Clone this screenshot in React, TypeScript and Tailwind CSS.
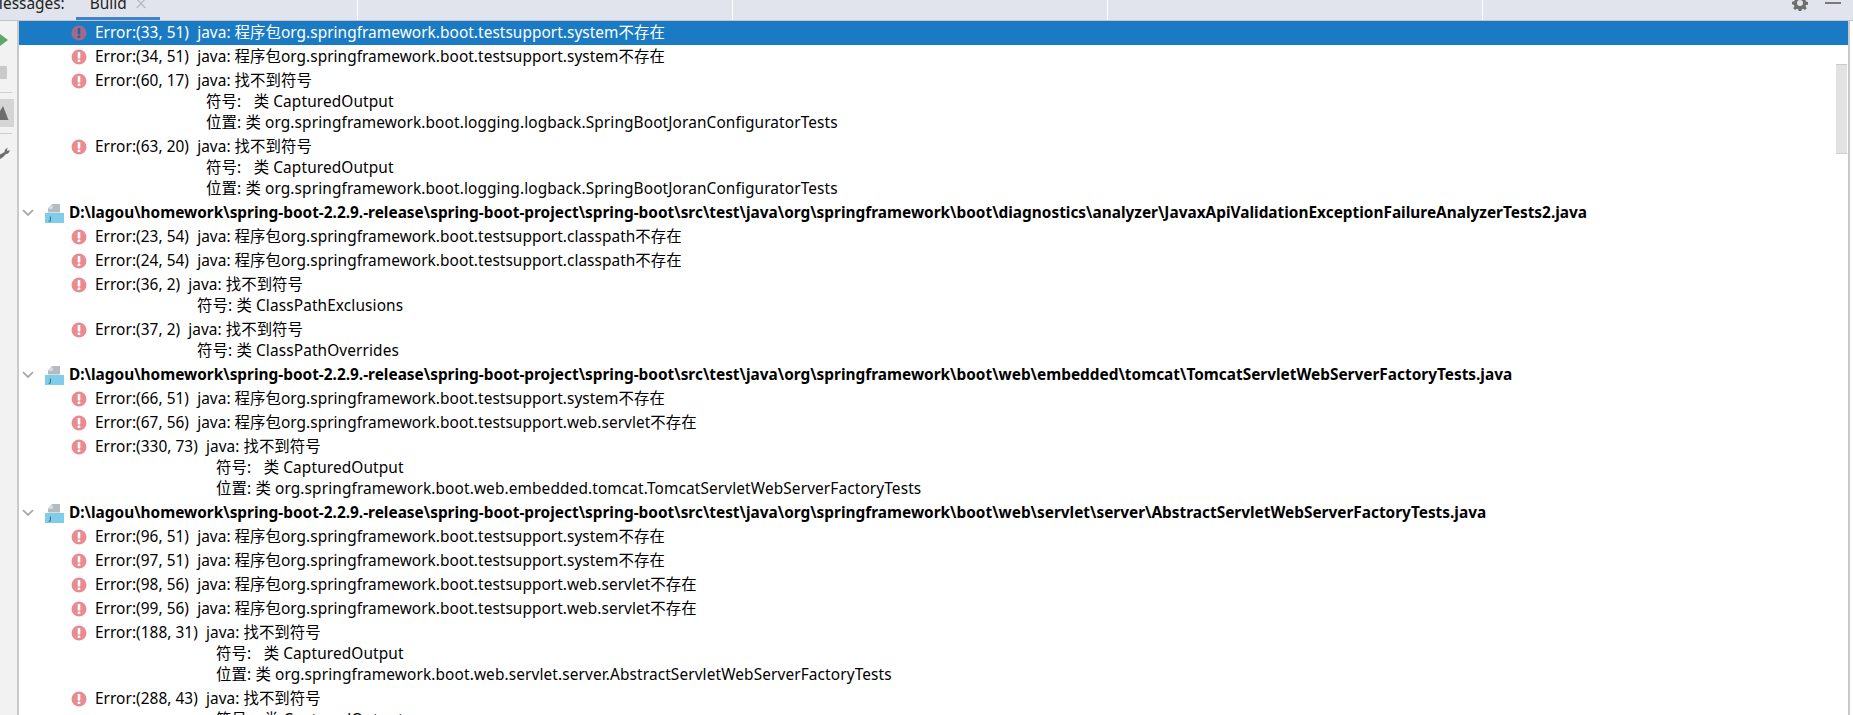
import React from "react";

const FONT = "font-['Noto_Sans','Noto_Sans_CJK_SC',sans-serif]";

type Row =
  | { t: "h"; text: string }
  | { t: "e"; text: string; sel?: boolean }
  | { t: "c"; text: string; pad: number };

const E = (text: string, sel?: boolean): Row => ({ t: "e", text, sel });
const C = (text: string, pad: number): Row => ({ t: "c", text, pad });
const H = (text: string): Row => ({ t: "h", text });

const base = "D:\\lagou\\homework\\spring-boot-2.2.9.-release\\spring-boot-project\\spring-boot\\src\\test\\java\\org\\springframework\\boot\\";
const pkg = "java: 程序包org.springframework.boot.testsupport.";

const rows: Row[] = [
  E(`Error:(33, 51)  ${pkg}system不存在`, true),
  E(`Error:(34, 51)  ${pkg}system不存在`),
  E("Error:(60, 17)  java: 找不到符号"),
  C("符号:   类 CapturedOutput", 206),
  C("位置: 类 org.springframework.boot.logging.logback.SpringBootJoranConfiguratorTests", 206),
  E("Error:(63, 20)  java: 找不到符号"),
  C("符号:   类 CapturedOutput", 206),
  C("位置: 类 org.springframework.boot.logging.logback.SpringBootJoranConfiguratorTests", 206),
  H(base + "diagnostics\\analyzer\\JavaxApiValidationExceptionFailureAnalyzerTests2.java"),
  E(`Error:(23, 54)  ${pkg}classpath不存在`),
  E(`Error:(24, 54)  ${pkg}classpath不存在`),
  E("Error:(36, 2)  java: 找不到符号"),
  C("符号: 类 ClassPathExclusions", 197),
  E("Error:(37, 2)  java: 找不到符号"),
  C("符号: 类 ClassPathOverrides", 197),
  H(base + "web\\embedded\\tomcat\\TomcatServletWebServerFactoryTests.java"),
  E(`Error:(66, 51)  ${pkg}system不存在`),
  E(`Error:(67, 56)  ${pkg}web.servlet不存在`),
  E("Error:(330, 73)  java: 找不到符号"),
  C("符号:   类 CapturedOutput", 216),
  C("位置: 类 org.springframework.boot.web.embedded.tomcat.TomcatServletWebServerFactoryTests", 216),
  H(base + "web\\servlet\\server\\AbstractServletWebServerFactoryTests.java"),
  E(`Error:(96, 51)  ${pkg}system不存在`),
  E(`Error:(97, 51)  ${pkg}system不存在`),
  E(`Error:(98, 56)  ${pkg}web.servlet不存在`),
  E(`Error:(99, 56)  ${pkg}web.servlet不存在`),
  E("Error:(188, 31)  java: 找不到符号"),
  C("符号:   类 CapturedOutput", 216),
  C("位置: 类 org.springframework.boot.web.servlet.server.AbstractServletWebServerFactoryTests", 216),
  E("Error:(288, 43)  java: 找不到符号"),
  C("符号:   类 CapturedOutput", 216),
];

function ErrorIcon({ sel }: { sel?: boolean }) {
  const mark = sel ? "#2f5f9f" : "#ffffff";
  return (
    <svg width="16" height="16" viewBox="0 0 16 16" className="shrink-0">
      <circle cx="8" cy="8" r="7.5" fill={sel ? "#a06a8a" : "#e98c91"} />
      <rect x="6.7" y="3" width="2.6" height="6.4" rx="0.6" fill={mark} />
      <rect x="6.7" y="10.6" width="2.6" height="2.4" rx="0.6" fill={mark} />
    </svg>
  );
}

function FileIcon() {
  return (
    <svg width="19" height="19" viewBox="0 0 19 19" className="shrink-0">
      <path d="M3 4.5 7 0h8v8.5H3z" fill="#b4bcc2" />
      <path d="M7.6 0.5v4.2H3.4z" fill="#dfe3e6" />
      <rect x="0" y="9" width="19" height="10" fill="#7fcdea" />
      <path d="M5.4 12.5v3.8c0 .9-.9 1.2-1.7.8" fill="none" stroke="#3d6f88" strokeWidth="1.1" />
    </svg>
  );
}

function TreeRow({ row }: { row: Row }) {
  if (row.t === "h") {
    return (
      <div className="h-6 flex items-center">
        <svg width="12" height="8" viewBox="0 0 12 8" className="ml-[3px] shrink-0">
          <path d="M1 1.2 6 6l5-4.8" fill="none" stroke="#a6a9ab" strokeWidth="1.8" />
        </svg>
        <span className="ml-[11px]"><FileIcon /></span>
        <span className="ml-[5px] font-bold text-[15.4px] text-black whitespace-nowrap">{row.text}</span>
      </div>
    );
  }
  if (row.t === "e") {
    return (
      <div className={`h-6 flex items-center pl-[52px] ${row.sel ? "bg-[#1a7bc4] text-white" : "text-black"}`}>
        <ErrorIcon sel={row.sel} />
        <span className="ml-[8px] text-[15.4px] tracking-[0.05px] whitespace-pre">{row.text}</span>
      </div>
    );
  }
  return (
    <div
      className="h-[21px] pb-[4px] flex items-center text-[15.4px] tracking-[0.12px] text-black whitespace-pre"
      style={{ paddingLeft: row.pad - 19 }}
    >
      {row.text}
    </div>
  );
}

function TopBar() {
  return (
    <div className="h-[21px] shrink-0 bg-[#e1e4ec] border-b border-[#c4c4c4] flex overflow-hidden text-[15.4px] leading-[20px] text-[#222222]">
      <div className="w-[358px] shrink-0 h-5 flex items-start border-r border-white">
        <span className="-ml-[11px] -mt-[6px]">Messages:</span>
        <div className="ml-[11px] w-[84px] h-5 flex items-start gap-[9px] pl-[14px] border-b-[3px] border-[#4083c9]">
          <span className="-mt-[6px]">Build</span>
          <svg width="10" height="10" viewBox="0 0 10 10" className="shrink-0 -mt-[1px]">
            <path d="M.7 0 9.300 9M9.300 0 .7 9" fill="none" stroke="#b5b8be" strokeWidth="1.2" />
          </svg>
        </div>
      </div>
      <div className="w-[375px] shrink-0 h-5 border-r border-white" />
      <div className="w-[375px] shrink-0 h-5 border-r border-white" />
      <div className="w-[375px] shrink-0 h-5 border-r border-white" />
      <div className="flex-1 flex items-start justify-end gap-[17px] pr-[12px]">
        <svg width="16" height="16" viewBox="0 0 16 16" className="shrink-0 -mt-[5px]">
          <path
            d="M6.700 0h2.600l.4 2.200 1.300.6 1.900-1.300 1.900 1.900-1.300 1.900.6 1.300 2.200.4v2.600l-2.200.4-.6 1.300 1.300 1.900-1.900 1.900-1.900-1.300-1.300.6-.4 2.200H6.700l-.4-2.200-1.300-.6-1.900 1.300-1.900-1.900 1.300-1.900-.6-1.300L0 9.300V6.700l2.200-.4.6-1.300-1.300-1.900 1.900-1.900 1.900 1.300 1.300-.6zM8 5a3 3 0 1 0 0 6 3 3 0 0 0 0-6z"
            fill="#6e6e6e"
            fillRule="evenodd"
          />
        </svg>
        <div className="w-4 h-[2px] mt-[2px] bg-[#7a7a7a]" />
      </div>
    </div>
  );
}

function SideBar() {
  return (
    <div className="w-[19px] shrink-0 bg-[#f2f2f2] border-r-2 border-[#c9c9c9] overflow-hidden flex flex-col items-start pt-[13px]">
      <svg width="9" height="12" viewBox="0 0 9 12" className="shrink-0">
        <path d="M0 0l8 6-8 6z" fill="#59a869" />
      </svg>
      <div className="mt-[20px] w-[7px] h-[13px] bg-[#c9c9c9]" />
      <div className="mt-[13px] w-3 h-px bg-[#cfcfcf]" />
      <div className="mt-[6px] w-[14px] h-7 bg-[#d5d5d5] flex items-center">
        <svg width="9" height="14" viewBox="0 0 9 14" className="shrink-0">
          <path d="M3 0l5.500 14H0V5z" fill="#6e6e6e" />
        </svg>
      </div>
      <div className="mt-[6px] w-3 h-px bg-[#cfcfcf]" />
      <svg width="10" height="12" viewBox="0 0 10 12" className="mt-[13px] shrink-0">
        <path d="M0 7.500 4.500 5 5 2.500 8 .5 6.800 3l1 1 1.700-1.200C10 5.500 8 7 6 7L2.500 10.500 0 12z" fill="#6e6e6e" />
      </svg>
    </div>
  );
}

export default function App() {
  return (
    <div className={`w-[1853px] h-[715px] overflow-hidden bg-white flex flex-col ${FONT}`}>
      <TopBar />
      <div className="flex-1 flex min-h-0">
        <SideBar />
        <div className="flex-1 min-w-0 relative overflow-hidden">
          {rows.map((r, i) => (
            <TreeRow key={i} row={r} />
          ))}
          <div className="absolute right-px top-[43px] w-[11px] h-[90px] bg-[#e2e2e2] border-y border-[#cccccc]" />
        </div>
        <div className="w-[5px] shrink-0 bg-white border-l-2 border-[#c9c9c9]" />
      </div>
    </div>
  );
}
